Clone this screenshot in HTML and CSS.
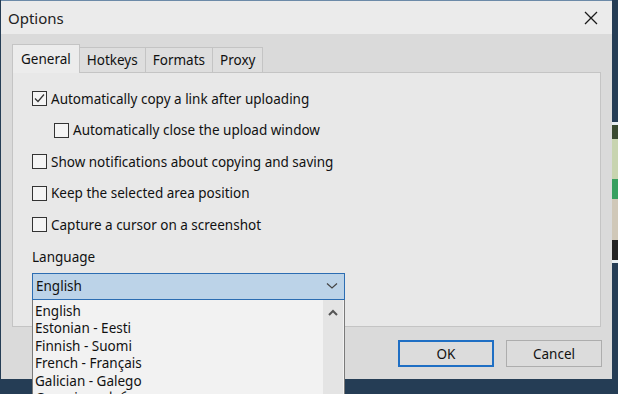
FILE: index.html
```html
<!DOCTYPE html>
<html lang="en">
<head>
    <meta charset="UTF-8">
    <title>Options</title>
    <link rel="stylesheet" href="styles.css">
</head>
<body>
    <div class="escritorio">
        <div class="ventana">
            <div class="barra-titulo">
                <span class="titulo">Options</span>
                <svg class="cerrar" width="14" height="14" viewBox="0 0 14 14"><path d="M1 1 L13 13 M13 1 L1 13" stroke="#1a1a1a" stroke-width="1.3" fill="none"/></svg>
            </div>
            <div class="cuerpo">
                <div class="pestanas">
                    <div class="pestana activa">General</div>
                    <div class="pestana">Hotkeys</div>
                    <div class="pestana">Formats</div>
                    <div class="pestana">Proxy</div>
                </div>
                <div class="panel">
                    <label class="opcion"><span class="casilla marcada"><svg width="11" height="11" viewBox="0 0 11 11"><path d="M1 5.5 L4 8.5 L10 1.5" stroke="#333" stroke-width="1.2" fill="none"/></svg></span>Automatically copy a link after uploading</label>
                    <label class="opcion sub"><span class="casilla"></span>Automatically close the upload window</label>
                    <label class="opcion"><span class="casilla"></span>Show notifications about copying and saving</label>
                    <label class="opcion"><span class="casilla"></span>Keep the selected area position</label>
                    <label class="opcion"><span class="casilla"></span>Capture a cursor on a screenshot</label>
                    <div class="etiqueta">Language</div>
                    <div class="combo">
                        <span>English</span>
                        <svg width="12" height="8" viewBox="0 0 12 8"><path d="M1 1.5 L6 6 L11 1.5" stroke="#444" stroke-width="1.2" fill="none"/></svg>
                        <div class="lista">
                            <div class="items">
                                <div>English</div>
                                <div>Estonian - Eesti</div>
                                <div>Finnish - Suomi</div>
                                <div>French - Français</div>
                                <div>Galician - Galego</div>
                                <div>Georgian - ქართული</div>
                            </div>
                            <div class="scroll">
                                <svg width="10" height="7" viewBox="0 0 10 7"><path d="M1 6 L5 2 L9 6" stroke="#555" stroke-width="2" fill="none"/></svg>
                            </div>
                        </div>
                    </div>
                </div>
                <div class="botones">
                    <button class="boton ok">OK</button>
                    <button class="boton">Cancel</button>
                </div>
            </div>
        </div>
        <div class="fondo-derecha">
            <div class="miniatura"></div>
        </div>
    </div>
</body>
</html>
```

FILE: styles.css
```css
html, body {
    margin: 0;
    height: 100%;
    overflow: hidden;
}
body {
    font-family: "Noto Sans", "Open Sans", sans-serif;
    font-size: 13.5px;
    color: #111;
    background: #253d55;
}
.escritorio {
    display: flex;
    height: 394px;
    padding-left: 1px;
}
.ventana {
    width: 611px;
    height: 378px;
    display: flex;
    flex-direction: column;
    background: #dadada;
    border-top: 1px solid #6c8aa8;
}
.barra-titulo {
    height: 33px;
    background: #ebebeb;
    display: flex;
    align-items: center;
    justify-content: space-between;
    padding: 0 14px 0 7px;
}
.titulo {
    font-size: 15px;
    color: #222;
}
.cuerpo {
    flex: 1;
    padding: 10px 11px 0 11px;
    display: flex;
    flex-direction: column;
}
.pestanas {
    display: flex;
    align-items: flex-end;
    height: 28px;
}
.pestana {
    height: 24px;
    padding: 0 7px;
    line-height: 25px;
    border: 1px solid #c4c4c4;
    border-bottom: none;
    margin-left: -1px;
    background: #dedede;
}
.pestana.activa {
    height: 28px;
    line-height: 28px;
    margin-left: 0;
    padding: 0 8px;
    background: #ececec;
    position: relative;
    z-index: 1;
    margin-bottom: -1px;
}
.panel {
    height: 255px;
    background: #e8e8e8;
    border: 1px solid #c4c4c4;
    padding: 10px 0 0 19px;
    box-sizing: border-box;
}
.opcion {
    display: flex;
    align-items: center;
    height: 31.5px;
    gap: 4px;
}
.opcion.sub {
    padding-left: 22px;
}
.casilla {
    width: 13px;
    height: 13px;
    border: 1px solid #333;
    background: #f4f4f4;
    display: flex;
    align-items: center;
    justify-content: center;
}
.etiqueta {
    margin-top: 4px;
    height: 24px;
    line-height: 24px;
}
.combo {
    position: relative;
    margin-top: 4px;
    width: 313px;
    height: 27px;
    box-sizing: border-box;
    border: 1px solid #2c6db2;
    background: #bcd3e8;
    display: flex;
    align-items: center;
    justify-content: space-between;
    padding: 0 6px 0 3px;
}
.lista {
    position: absolute;
    left: -1px;
    top: 26px;
    width: 313px;
    height: 100px;
    box-sizing: border-box;
    background: #f2f2f2;
    border: 1px solid #7a7a7a;
    border-top: none;
    display: flex;
    z-index: 5;
}
.items {
    flex: 1;
    padding: 3px 2px;
    line-height: 17.5px;
}
.scroll {
    width: 20px;
    margin-right: 1px;
    background: #e4e4e4;
    display: flex;
    justify-content: center;
    padding-top: 9px;
}
.botones {
    display: flex;
    justify-content: flex-end;
    gap: 12px;
    padding: 13px 0 0 0;
    margin-right: -1px;
}
.boton {
    width: 96px;
    height: 27px;
    font-family: inherit;
    font-size: 13.5px;
    color: #111;
    background: #dcdcdc;
    border: 1px solid #adadad;
}
.boton.ok {
    border: 2px solid #1f6fc4;
}
.fondo-derecha {
    flex: 1;
    display: flex;
    flex-direction: column;
    padding-top: 122px;
}
.miniatura {
    height: 135px;
    border-top: 3px solid #e8eef2;
    border-bottom: 3px solid #e8eef2;
    background: linear-gradient(#3a4a30 0 10%, #c8d4b0 10% 40%, #38a060 40% 55%, #d0c8b8 55% 85%, #222 85%);
}
```
